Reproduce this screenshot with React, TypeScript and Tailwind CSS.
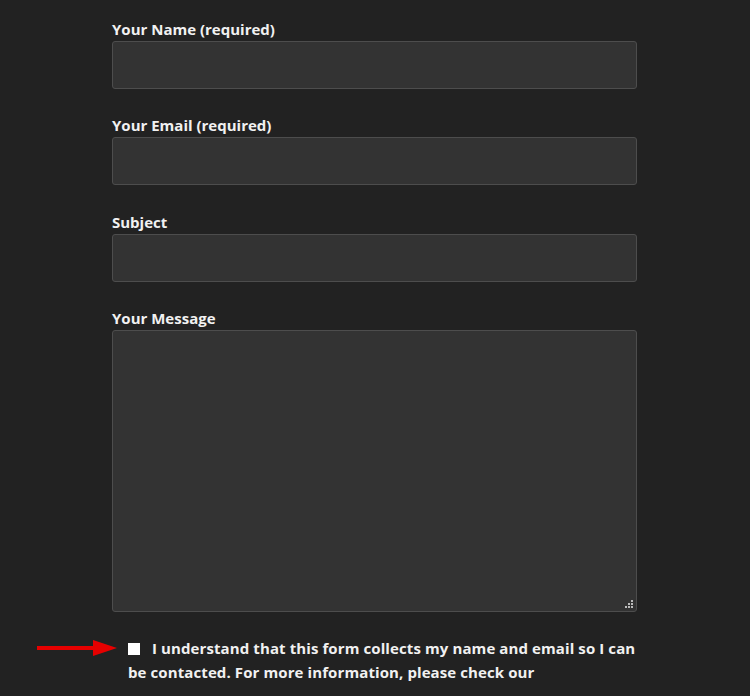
import React from "react";

const font = { fontFamily: "'Open Sans', 'Liberation Sans', sans-serif" };

function Field({ label, tall }: { label: string; tall?: boolean }) {
  return (
    <div className="mb-[24.33px]">
      <label className="block text-[15px] leading-[24px] font-bold text-[#f1f1f1] h-[24px]">{label}</label>
      {tall ? (
        <div className="relative">
          <textarea className="block w-full h-[282px] bg-[#333333] border border-[#4d4d4d] rounded-[3px] resize-none" />
          <svg className="absolute right-[3px] bottom-[3px]" width="9" height="9" viewBox="0 0 9 9">
            <rect x="6" y="0" width="2" height="2" fill="#bbbbbb" />
            <rect x="3" y="3" width="2" height="2" fill="#bbbbbb" />
            <rect x="6" y="3" width="2" height="2" fill="#bbbbbb" />
            <rect x="0" y="6" width="2" height="2" fill="#bbbbbb" />
            <rect x="3" y="6" width="2" height="2" fill="#bbbbbb" />
            <rect x="6" y="6" width="2" height="2" fill="#bbbbbb" />
          </svg>
        </div>
      ) : (
        <input className="block w-full h-[48px] bg-[#333333] border border-[#4d4d4d] rounded-[3px]" />
      )}
    </div>
  );
}

export default function App() {
  return (
    <div className="w-[750px] h-[696px] bg-[#222222] overflow-hidden" style={font}>
      <div className="relative ml-[112px] w-[525px] pt-[17px]">
        <Field label="Your Name (required)" />
        <Field label="Your Email (required)" />
        <Field label="Subject" />
        <Field label="Your Message" tall />
        <div className="relative pl-4 text-[15px] leading-[24px] font-bold text-[#f1f1f1] tracking-[0.1px]">
          <svg className="absolute left-[-75px] top-[4px]" width="80" height="16" viewBox="0 0 80 16">
            <rect x="0" y="6" width="60" height="4" fill="#e60000" />
            <polygon points="56,0 80,8 56,16" fill="#e60000" />
          </svg>
          <span className="inline-block w-[12px] h-[12px] bg-white mr-[12px] align-[-1px]" />
          I understand that this form collects my name and email so I can be contacted. For more information, please check our
        </div>
      </div>
    </div>
  );
}
